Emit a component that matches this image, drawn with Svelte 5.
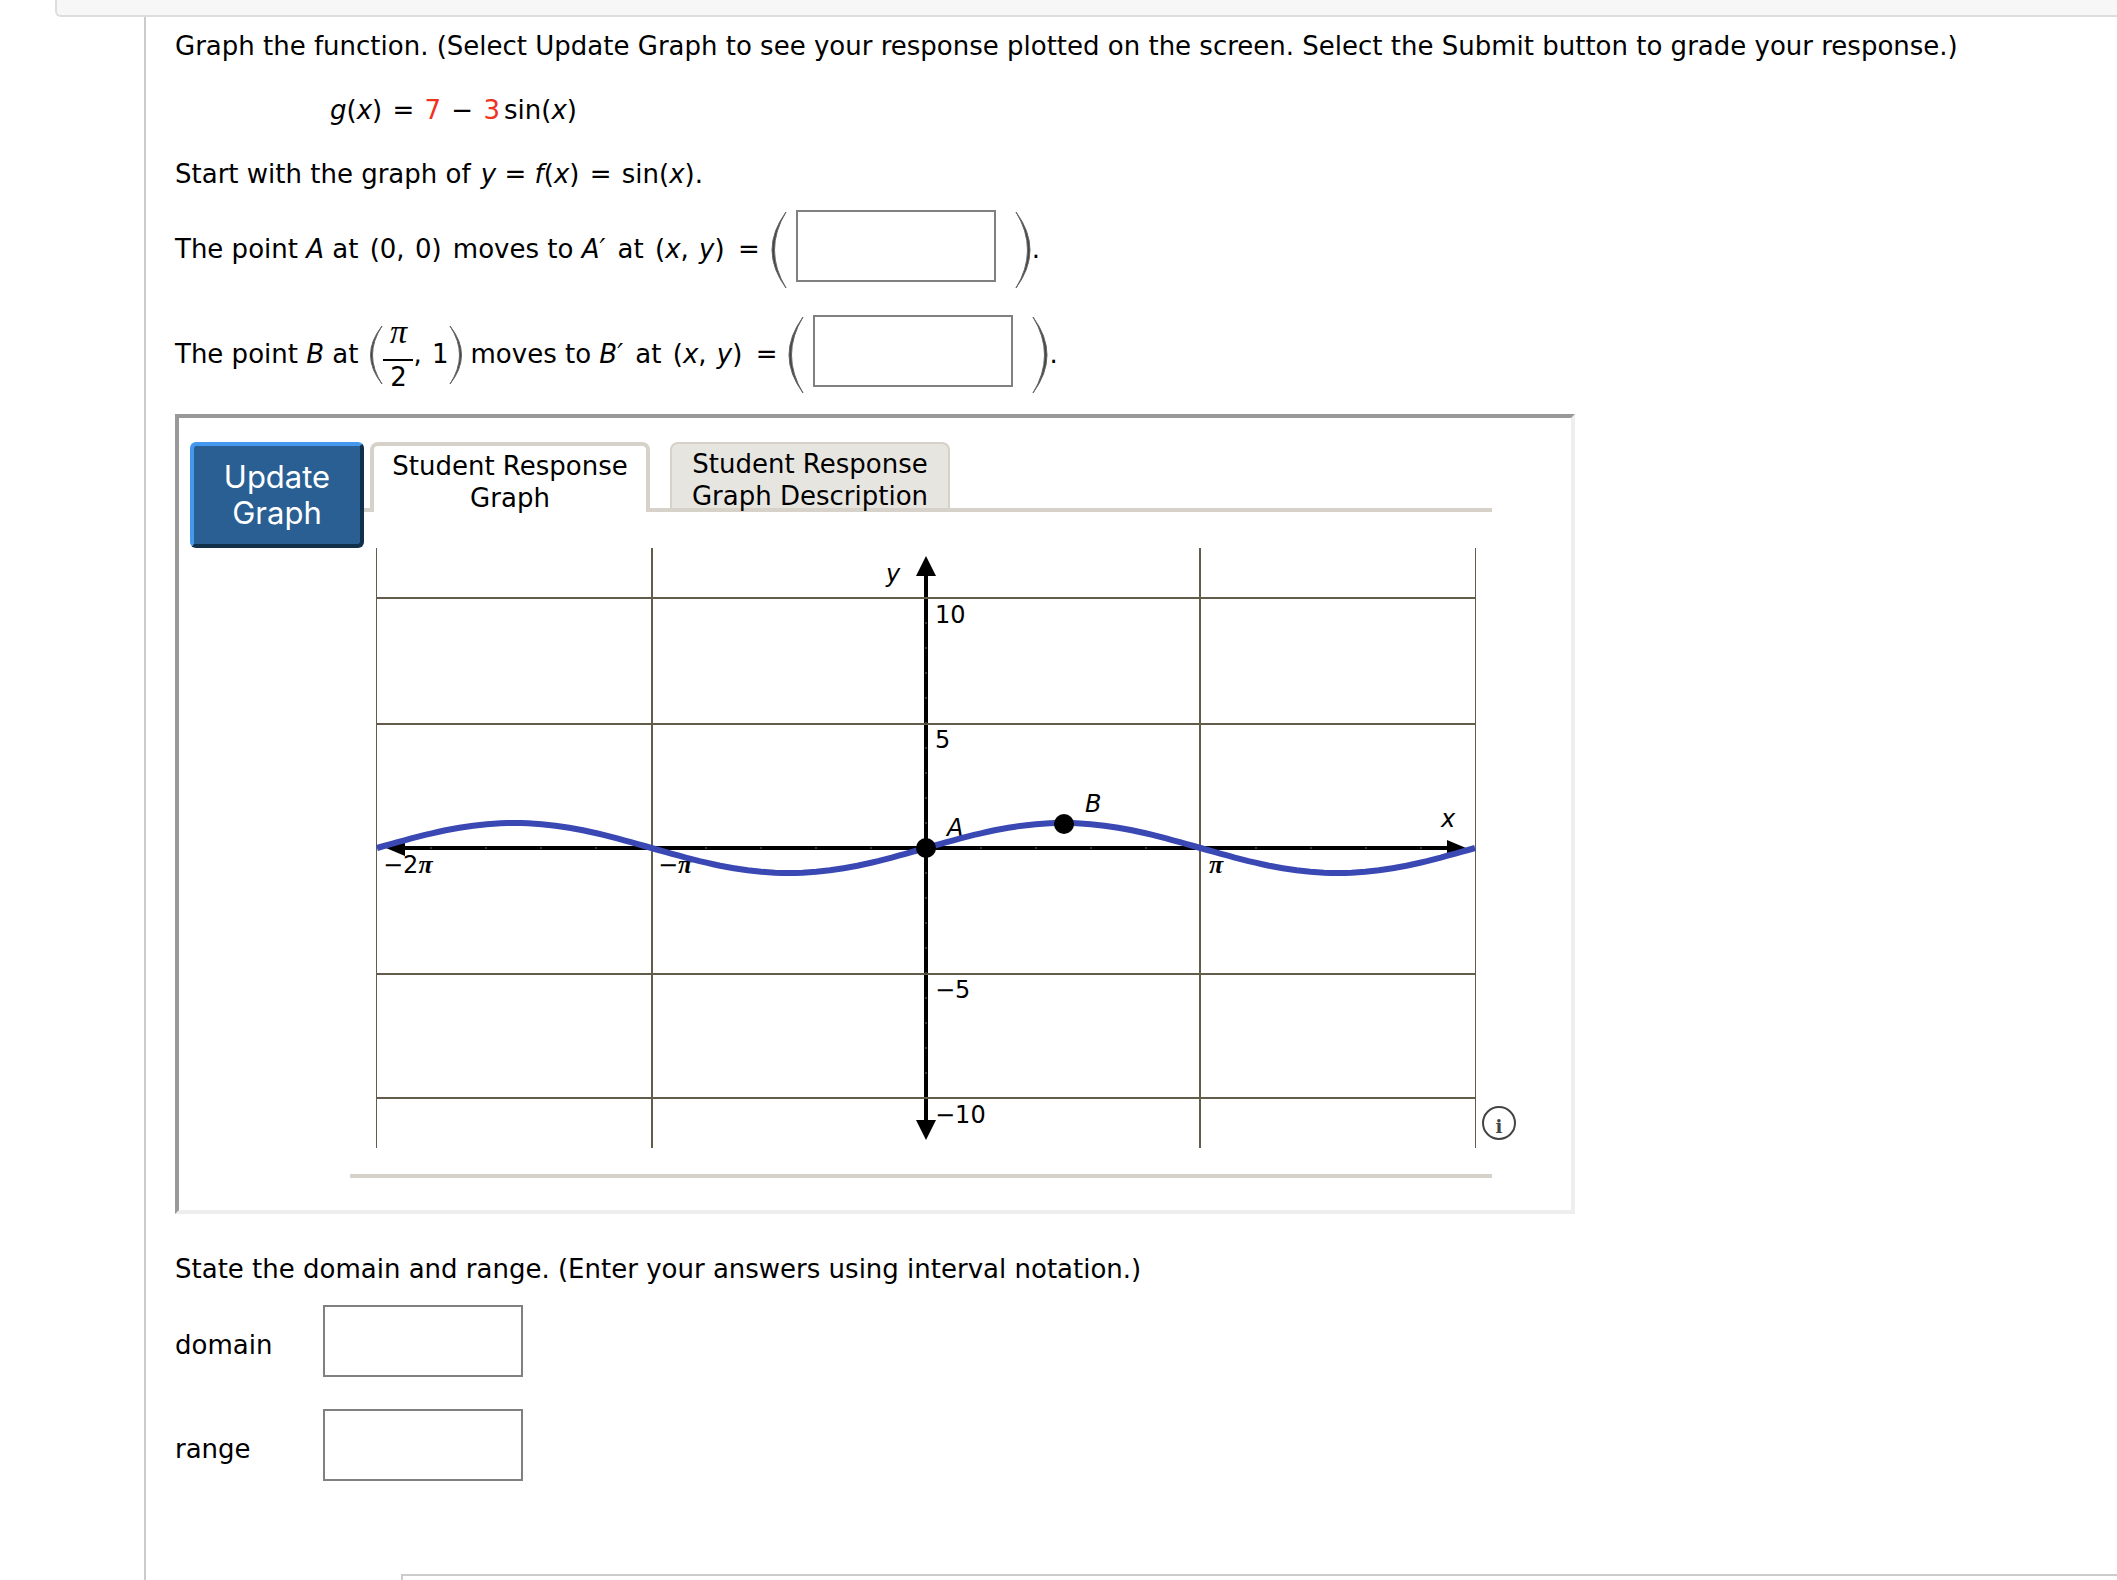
<script>
  let answers = $state({ pointA: "", pointB: "", domain: "", range: "" });
  let activeTab = $state("graph");

  // plot geometry
  const width = 1100;
  const height = 600;
  const originX = 550;
  const originY = 300;
  const unitX = 549 / (2 * Math.PI);
  const unitY = 25;

  const gridX = [276, 824];
  const gridY = [50, 176, 426, 550];
  const ticks = [-9, -8, -7, -6, -5, -4, -3, -2, -1, 1, 2, 3, 4, 5, 6, 7, 8, 9];

  const tabs = [
    { id: "graph", lines: ["Student Response", "Graph"] },
    { id: "description", lines: ["Student Response", "Graph Description"] },
  ];

  function buildCurve() {
    const points = [];
    for (let i = 0; i <= 160; i++) {
      const x = -2 * Math.PI + (i / 160) * 4 * Math.PI;
      const px = originX + x * unitX;
      const py = originY - Math.sin(x) * unitY;
      points.push(`${px.toFixed(1)},${py.toFixed(1)}`);
    }
    return points.join(" ");
  }

  let curve = $state(buildCurve());

  function updateGraph() {
    curve = buildCurve();
  }
</script>

{#snippet paren(side, size)}
  <svg
    class="paren {size}"
    viewBox={size === "big" ? "0 0 18 76" : "0 0 14 58"}
    aria-hidden="true"
  >
    {#if size === "big"}
      <path d={side === "left" ? "M16 0Q-12 38 16 76Q-7 38 16 0Z" : "M2 0Q30 38 2 76Q25 38 2 0Z"} />
    {:else}
      <path d={side === "left" ? "M13 0Q-10 29 13 58Q-6 29 13 0Z" : "M1 0Q24 29 1 58Q20 29 1 0Z"} />
    {/if}
  </svg>
{/snippet}

{#snippet xy()}
  <span class="coord">(<i>x</i>, <i class="second">y</i>)</span>
{/snippet}

<div class="page">
  <header class="topbar"></header>
  <main class="question">
    <p>
      Graph the function. (Select Update Graph to see your response plotted on
      the screen. Select the Submit button to grade your response.)
    </p>
    <p class="formula">
      <i>g</i>(<i>x</i>) <span class="op">=</span> <span class="red">7</span>
      <span class="op">−</span> <span class="red">3</span><span class="fn">sin(<i>x</i>)</span>
    </p>
    <p>
      Start with the graph of <i class="second">y</i> = <i>f</i>(<i>x</i>)
      <span class="op">=</span> sin(<i>x</i>).
    </p>

    <div class="points">
      <div class="row">
        <label class="text" for="point-a">
          The point <i>A</i> at
          <span class="coord">(0, <span class="second">0</span>)</span>
          moves to <i class="prime">A′</i> at {@render xy()} <span class="op">=</span>
        </label>
        {@render paren("left", "big")}
        <input id="point-a" type="text" class="math-box" bind:value={answers.pointA} />
        {@render paren("right", "big")}
        <span class="text">.</span>
      </div>
      <div class="row">
        <span class="text">The point <i>B</i> at</span>
        {@render paren("left", "small")}
        <span class="fraction">
          <span class="num pi">π</span>
          <span class="den">2</span>
        </span>
        <span class="text one">, <span class="second">1</span></span>
        {@render paren("right", "small")}
        <label class="text moves" for="point-b">
          moves to <i class="prime">B′</i> at {@render xy()} <span class="op">=</span>
        </label>
        {@render paren("left", "big")}
        <input id="point-b" type="text" class="math-box" bind:value={answers.pointB} />
        {@render paren("right", "big")}
        <span class="text">.</span>
      </div>
    </div>

    <section class="frame">
      <button class="update" onclick={updateGraph}>Update Graph</button>
      <div class="panel">
        <div class="tabs" role="tablist">
          {#each tabs as tab}
            <button
              role="tab"
              class="tab"
              class:active={activeTab === tab.id}
              aria-selected={activeTab === tab.id}
              onclick={() => (activeTab = tab.id)}
            >
              <span>{tab.lines[0]}<br />{tab.lines[1]}</span>
            </button>
          {/each}
        </div>
        <div class="plot">
          <svg class="chart" viewBox="0 0 {width} {height}" role="img" aria-label="Graph of y = sin(x)">
            <g class="axis">
              <line x1="550" y1="20" x2="550" y2="580" />
              <line x1="20" y1="300" x2="1080" y2="300" />
            </g>
            <g class="grid">
              <line class="edge" x1="0.5" y1="0" x2="0.5" y2={height} />
              <line class="edge" x1="1099.5" y1="0" x2="1099.5" y2={height} />
              {#each gridX as x}
                <line x1={x} y1="0" x2={x} y2={height} />
              {/each}
              {#each gridY as y}
                <line x1="0" y1={y} x2={width} y2={y} />
              {/each}
            </g>
            <g class="ticks">
              {#each ticks as t}
                <rect x={originX + t * 55 - 1} y={originY - 1} width="2" height="2" />
                <rect x={originX - 1} y={originY + t * unitY - 1} width="2" height="2" />
              {/each}
            </g>
            <path d="M550 8l10 20h-20zM550 592l10-20h-20zM10 300l19-8v16zM1090 300l-19-8v16z" />
            <g class="labels">
              <text x="510" y="34" class="var">y</text>
              <text x="1065" y="279" class="var">x</text>
              <text x="559" y="75">10</text>
              <text x="559" y="200">5</text>
              <text x="559" y="450">−5</text>
              <text x="559" y="575">−10</text>
              <text x="7" y="325">−2<tspan class="pi">π</tspan></text>
              <text x="282" y="325">−<tspan class="pi">π</tspan></text>
              <text x="833" y="325" class="pi">π</text>
              <text x="571" y="288" class="var">A</text>
              <text x="709" y="264" class="var">B</text>
            </g>
            <polyline class="curve" points={curve} />
            <circle cx="550" cy="300" r="10" />
            <circle cx="688" cy="276" r="10" />
          </svg>
          <button class="info" aria-label="Graph information">i</button>
        </div>
      </div>
    </section>

    <p class="state">State the domain and range. (Enter your answers using interval notation.)</p>
    <div class="row answer">
      <label class="text name" for="domain">domain</label>
      <input id="domain" type="text" class="math-box" bind:value={answers.domain} />
    </div>
    <div class="row answer">
      <label class="text name" for="range">range</label>
      <input id="range" type="text" class="math-box" bind:value={answers.range} />
    </div>
    <div class="next-box"></div>
  </main>
</div>

<style>
  :global(body) {
    margin: 0;
    background: #fff;
  }

  .page {
    box-sizing: border-box;
    min-height: 100vh;
    display: flex;
    flex-direction: column;
    font-family: Verdana, "DejaVu Sans", sans-serif;
    font-size: 26px;
    line-height: 32px;
    color: #000;
  }

  .topbar {
    height: 15px;
    margin-left: 55px;
    background: #f7f7f7;
    border: 2px solid #ddd;
    border-width: 0 0 2px 2px;
    border-bottom-left-radius: 6px;
  }

  .question {
    flex: 1;
    display: flex;
    flex-direction: column;
    margin-left: 144px;
    padding: 13px 0 0 29px;
    border-left: 2px solid #ccc;
  }

  p {
    margin: 0 0 32px;
  }

  p:nth-of-type(3) {
    margin-bottom: 14px;
  }

  .formula {
    padding-left: 155px;
  }

  .red {
    color: #e32;
  }

  .op {
    margin: 0 2px;
  }

  .fn {
    margin-left: 4px;
  }

  .coord {
    margin: 0 3px;
  }

  .second {
    margin-left: 2px;
  }

  .prime {
    margin-right: 4px;
  }

  .points {
    display: flex;
    flex-direction: column;
    gap: 21px;
    margin-bottom: 21px;
  }

  .row {
    display: flex;
    align-items: center;
  }

  .text {
    padding-top: 6px;
    white-space: nowrap;
  }

  .moves {
    margin-left: 8px;
  }

  .math-box {
    box-sizing: border-box;
    width: 200px;
    height: 72px;
    border: 2px solid #808080;
    padding: 4px 12px;
    background: #fff;
    font: inherit;
    outline: none;
  }

  .paren {
    flex: none;
    padding-top: 8px;
    fill: #444;
    stroke: #666;
    stroke-width: 1;
  }

  .paren.big {
    width: 18px;
    height: 76px;
    margin: 0 8px;
  }

  .math-box + .paren.big {
    margin: 0 0 0 18px;
  }

  .paren.small {
    width: 14px;
    height: 58px;
  }

  .text + .paren.small {
    margin-left: 11px;
  }

  .text.one + .paren.small {
    margin-left: 0;
  }

  .fraction {
    display: flex;
    flex-direction: column;
    width: 30px;
    padding-top: 9px;
    text-align: center;
  }

  .num {
    line-height: 28px;
    padding-bottom: 13px;
    border-bottom: 2px solid #000;
  }

  .den {
    line-height: 32px;
  }

  .pi {
    font-family: "Liberation Serif", "Times New Roman", serif;
    font-style: italic;
    font-size: 34px;
  }

  .frame {
    box-sizing: border-box;
    display: flex;
    align-items: flex-start;
    width: calc(100% - 24px);
    max-width: 1400px;
    min-height: 800px;
    padding: 24px 79px 32px 11px;
    border: 4px solid;
    border-color: #999 #eee #eee #999;
  }

  .update {
    flex: none;
    position: relative;
    width: 174px;
    height: 106px;
    margin-right: -14px;
    padding: 0 20px;
    border: 4px solid;
    border-color: #49e #123049 #123049 #49e;
    border-radius: 6px;
    background: #295f93;
    color: #fff;
    font: 31px/36px Inter, sans-serif;
  }

  .panel {
    flex: 1;
    min-width: 0;
    padding-bottom: 26px;
    border-bottom: 4px solid #d6d2c9;
  }

  .tabs {
    display: flex;
    gap: 20px;
    height: 66px;
    padding-left: 20px;
    border-bottom: 4px solid #d6d2c9;
  }

  .tab {
    box-sizing: border-box;
    display: flex;
    justify-content: center;
    align-items: flex-start;
    width: 280px;
    height: 66px;
    padding: 4px 0 0;
    border: 2px solid #d6d2c9;
    border-bottom: 0;
    border-radius: 8px 8px 0 0;
    background: #e7e5e0;
    color: #000;
    font: inherit;
    white-space: nowrap;
  }

  .tab.active {
    height: 70px;
    border-width: 4px 4px 0;
    background: #fff;
  }

  .plot {
    display: flex;
    align-items: flex-end;
    gap: 6px;
    margin: 36px -24px 0 26px;
  }

  .chart {
    flex: 1;
    min-width: 0;
    display: block;
  }

  .grid line {
    stroke: #635c4b;
    stroke-width: 2;
  }

  .grid .edge {
    stroke-width: 1;
  }

  .axis line {
    stroke: #000;
    stroke-width: 4;
  }

  .ticks rect {
    fill: #3a372d;
  }

  .labels {
    font-size: 24px;
  }

  .labels .pi {
    font-size: 26px;
    font-weight: bold;
  }

  .var {
    font-style: italic;
  }

  .curve {
    fill: none;
    stroke: #3a48b4;
    stroke-width: 6;
  }

  .info {
    flex: none;
    width: 34px;
    height: 34px;
    margin-bottom: 8px;
    padding: 8px 0 0;
    border: 2px solid #444;
    border-radius: 50%;
    background: #fff;
    color: #444;
    font: bold 18px/18px "DejaVu Serif", serif;
  }

  .state {
    margin: 39px 0 20px;
  }

  .answer {
    margin-bottom: 32px;
  }

  .name {
    width: 148px;
    padding-top: 8px;
  }

  .next-box {
    height: 4px;
    margin: 61px 0 0 226px;
    border: 2px solid #ccc;
    border-width: 2px 0 0 2px;
  }
</style>
